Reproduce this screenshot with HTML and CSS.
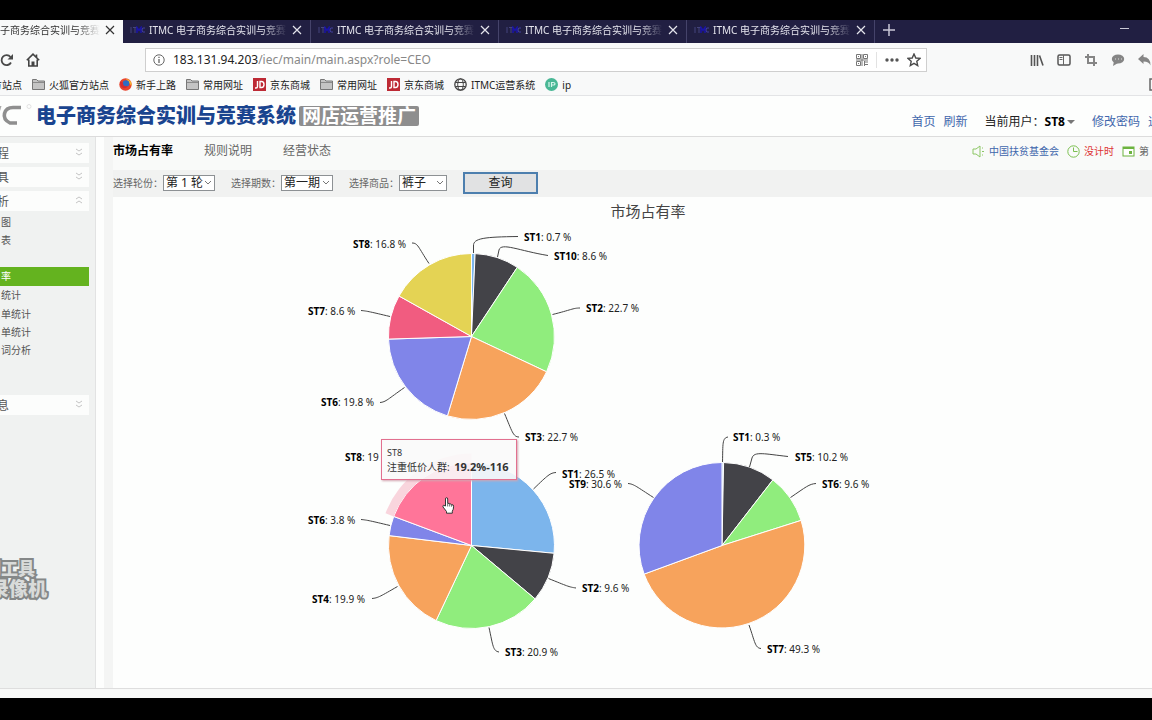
FILE: index.html
```html
<!DOCTYPE html>
<html lang="zh-CN">
<head>
  <meta charset="UTF-8">
  <title>ITMC 电子商务综合实训与竞赛系统</title>
  <link rel="stylesheet" href="styles.css">
</head>
<body>
  <svg class="defs" width="0" height="0" aria-hidden="true">
    <symbol id="close" viewBox="0 0 10 10"><path d="M1 1l8 8M9 1l-8 8" fill="none" stroke="currentColor" stroke-width="1.2"/></symbol>
    <symbol id="folder" viewBox="0 0 13 13"><path d="M.5 11.500V1.500h4l1.500 1.500h6.500v8.500z" fill="#c4c4c4" stroke="#777"/><path d="M1 4.500h11" stroke="#8a8a8a"/></symbol>
    <symbol id="jd" viewBox="0 0 13 13"><path d="M0 0h13v13H0z" fill="#bd2a35"/><path d="M4.500 3v5.500q0 1.500-1.500 1.500H2M7 3.500v6h1.500q2.500 0 2.500-3t-2.500-3z" fill="none" stroke="#fff" stroke-width="1.400"/></symbol>
    <symbol id="fold" viewBox="0 0 8 8"><path d="M1 1l3 2 3-2M1 5l3 2 3-2" fill="none" stroke="#c4c4c4"/></symbol>
    <symbol id="arrow" viewBox="0 0 8 8"><path d="M1 2l3 3 3-3" fill="none" stroke="#777"/></symbol>
    <symbol id="itmc" viewBox="0 0 16 8"><path d="M1 1v6M3 1.500h4M5 1.500V7" fill="none" stroke="#45447c"/><path d="M7 7V1.500l2 3 2-3V7" fill="none" stroke="#1a14a8" stroke-width="1.500"/><path d="M15 2q-3-1-3 2t3 2" fill="none" stroke="#403f9b"/></symbol>
  </svg>

  <div class="tabs">
    <div class="tab active"><span class="tab-title">子商务综合实训与竞赛</span><button aria-label="关闭"><svg><use href="#close"/></svg></button></div>
    <div class="tab"><svg class="fav"><use href="#itmc"/></svg><span class="tab-title">ITMC 电子商务综合实训与竞赛</span><button aria-label="关闭"><svg><use href="#close"/></svg></button></div>
    <div class="tab"><svg class="fav"><use href="#itmc"/></svg><span class="tab-title">ITMC 电子商务综合实训与竞赛</span><button aria-label="关闭"><svg><use href="#close"/></svg></button></div>
    <div class="tab"><svg class="fav"><use href="#itmc"/></svg><span class="tab-title">ITMC 电子商务综合实训与竞赛</span><button aria-label="关闭"><svg><use href="#close"/></svg></button></div>
    <div class="tab"><svg class="fav"><use href="#itmc"/></svg><span class="tab-title">ITMC 电子商务综合实训与竞赛</span><button aria-label="关闭"><svg><use href="#close"/></svg></button></div>
    <button class="new-tab" aria-label="新标签"><svg width="12" height="12"><path d="M6 0v12M0 6h12" stroke="#c9c8d6" stroke-width="1.500"/></svg></button>
    <button class="min" aria-label="最小化"><svg width="9" height="12"><path d="M0 4.500h9" stroke="#c9c8d6"/></svg></button>
  </div>

  <div class="toolbar">
    <div class="nav">
      <button aria-label="刷新"><svg width="14" height="14" viewBox="0 0 14 14"><path d="M11 9.500A5 5 0 1 1 10.500 4" fill="none" stroke="#4a4a4a" stroke-width="1.800"/><path d="M13 1v5.500H7.500z" fill="#4a4a4a"/></svg></button>
      <button aria-label="主页"><svg width="14" height="14" viewBox="0 0 14 14"><path d="M.8 7.200L7 1.200l6.200 6M2.800 6.500V13h8.400V6.500M10.500 1.500v3" fill="none" stroke="#444" stroke-width="1.600"/><path d="M5.500 13V8.500h3V13z" fill="#444"/></svg></button>
    </div>
    <div class="urlbar">
      <svg width="12" height="12" viewBox="0 0 12 12"><circle cx="6" cy="6" r="5.200" fill="none" stroke="#666"/><path d="M6 5v4M6 2.700v1.300" stroke="#666" stroke-width="1.300"/></svg>
      <span class="url"><b>183.131.94.203</b>/iec/main/main.aspx?role=CEO</span>
      <svg width="12" height="12" viewBox="0 0 12 12"><path d="M.5 .5h4v4h-4zM7.500 .5h4v4h-4zM.5 7.500h4v4h-4zM2 2.500h1M9 2.500h1M2 9.500h1M6 0v12M0 6h12M8 8h4M8 10.500h4M8.500 7v5" fill="none" stroke="#777"/></svg>
      <i class="sep"></i>
      <svg width="14" height="12"><circle cx="2" cy="6" r="1.700" fill="#555"/><circle cx="7" cy="6" r="1.700" fill="#555"/><circle cx="12" cy="6" r="1.700" fill="#555"/></svg>
      <svg width="14" height="14" viewBox="0 0 14 14"><path d="M7 1l1.800 4 4.200.4-3.200 2.900.9 4.300L7 10.400l-3.700 2.200.9-4.300L1 5.400 5.200 5z" fill="none" stroke="#4a4a4a" stroke-width="1.400"/></svg>
    </div>
    <div class="tools">
      <svg width="14" height="14" viewBox="0 0 14 14"><path d="M1.500 2v11M4.500 2v11M7.500 2v11M9.500 2.500l3.500 10" stroke="#555" stroke-width="1.600"/></svg>
      <svg width="14" height="14" viewBox="0 0 14 14"><rect x="1" y="2" width="12" height="10" rx="1.500" fill="none" stroke="#555" stroke-width="1.500"/><path d="M6.500 2v10M2.500 4.500h3M2.500 6.500h3" stroke="#666"/></svg>
      <svg width="14" height="14" viewBox="0 0 14 14"><path d="M4 1v9h9M1 4h9v9" fill="none" stroke="#858585" stroke-width="2"/></svg>
      <svg width="14" height="14" viewBox="0 0 14 14"><ellipse cx="7" cy="6" rx="6.200" ry="4.500" fill="#858585"/><path d="M3 8l-1 5 5-3z" fill="#858585"/><path d="M4 6h1M7 6h1M10 6h1" stroke="#ddd"/></svg>
      <svg width="14" height="14" viewBox="0 0 14 14"><path d="M0 6l5.500-5v3q7 0 7 8.500-1.500-4-7-4V11z" fill="#858585"/></svg>
    </div>
  </div>

  <div class="bookmarks">
    <a href="#">方站点</a>
    <a href="#"><svg><use href="#folder"/></svg>火狐官方站点</a>
    <a href="#"><svg viewBox="0 0 13 13"><circle cx="6.500" cy="6.500" r="6.200" fill="#e8442e"/><path d="M7 1a5.800 5.800 0 0 1 5.500 7Q10 5 7 1z" fill="#f6b52e"/><circle cx="7" cy="5.500" r="3.300" fill="#2c6dc4"/><path d="M1 4q2-1 3 1 0 4 5 3-2 3-5 2T1 4z" fill="#d22d32"/></svg>新手上路</a>
    <a href="#"><svg><use href="#folder"/></svg>常用网址</a>
    <a href="#"><svg><use href="#jd"/></svg>京东商城</a>
    <a href="#"><svg><use href="#folder"/></svg>常用网址</a>
    <a href="#"><svg><use href="#jd"/></svg>京东商城</a>
    <a href="#"><svg viewBox="0 0 13 13"><circle cx="6.500" cy="6.500" r="5.700" fill="none" stroke="#444" stroke-width="1.300"/><ellipse cx="6.500" cy="6.500" rx="2.800" ry="5.700" fill="none" stroke="#444"/><path d="M1.500 4.500h10M1.500 8.500h10" stroke="#444"/></svg>ITMC运营系统</a>
    <a href="#"><svg viewBox="0 0 13 13"><circle cx="6.500" cy="6.500" r="6.500" fill="#49b795"/><path d="M4 4v5M6.500 9V4.500h1.500q2 0 2 1.300T8 7H6.500" fill="none" stroke="#d8f5ec" stroke-width="1.200"/></svg>ip</a>
    <svg class="more" viewBox="0 0 8 13"><path d="M8 1H1v11h7" fill="none" stroke="#666" stroke-width="1.500"/></svg>
  </div>

  <div class="header">
    <svg class="logo" viewBox="0 0 34 26"><path d="M21 4.500h-8Q6 4.500 4.500 10.500T10 20h7" fill="none" stroke="#8f8f8f" stroke-width="3.600"/><path d="M0 3h1.500L0 8z" fill="#aaa"/><circle cx="29" cy="3.500" r="2" fill="none" stroke="#e2e2e2"/></svg>
    <h1>电子商务综合实训与竞赛系统</h1>
    <span class="badge">网店运营推广</span>
    <div class="user">
      <a href="#">首页</a>
      <a href="#">刷新</a>
      <span class="who">当前用户：<b>ST8</b><i class="caret"></i></span>
      <a href="#">修改密码</a>
      <a href="#">退</a>
    </div>
  </div>

  <div class="main">
    <div class="sidebar">
      <h3>程<svg><use href="#fold"/></svg></h3>
      <h3>具<svg><use href="#fold"/></svg></h3>
      <h3>析<svg class="up"><use href="#fold"/></svg></h3>
      <ul>
        <li><a href="#">图</a></li>
        <li><a href="#">表</a></li>
        <li></li>
        <li class="on"><a href="#">率</a></li>
        <li><a href="#">统计</a></li>
        <li><a href="#">单统计</a></li>
        <li><a href="#">单统计</a></li>
        <li><a href="#">词分析</a></li>
        <li></li>
        <li></li>
      </ul>
      <h3>息<svg><use href="#fold"/></svg></h3>
      <div class="watermark"><span>制工具</span><b>录像机</b></div>
    </div>

    <div class="content">
      <div class="subnav">
        <a class="on" href="#">市场占有率</a>
        <a href="#">规则说明</a>
        <a href="#">经营状态</a>
        <div class="status">
          <svg width="13" height="13" viewBox="0 0 13 13"><path d="M1 4h3l4-3v11L4 9H1zM10 3h1M10 6.500h2M10 10h1" fill="none" stroke="#8cc665"/></svg>
          <a href="#">中国扶贫基金会</a>
          <svg width="13" height="13" viewBox="0 0 13 13"><circle cx="6.500" cy="6.500" r="5.700" fill="none" stroke="#7bbf4f"/><path d="M6.500 2.500v4h4" fill="none" stroke="#7bbf4f"/></svg>
          <span class="red">没计时</span>
          <svg width="13" height="13" viewBox="0 0 13 13"><rect x="1" y="2" width="11" height="9" fill="#fff" stroke="#6cb33f"/><path d="M1 3h11" stroke="#6cb33f" stroke-width="2"/><path d="M7 6h3v3H7z" fill="#6cb33f"/></svg>
          <span>第</span>
        </div>
      </div>

      <form class="filter">
        <label for="round">选择轮份：</label>
        <span class="select"><select id="round"><option>第 1 轮</option></select><svg><use href="#arrow"/></svg></span>
        <label for="period">选择期数：</label>
        <span class="select"><select id="period"><option>第一期</option></select><svg><use href="#arrow"/></svg></span>
        <label for="goods">选择商品：</label>
        <span class="select short"><select id="goods"><option>裤子</option></select><svg><use href="#arrow"/></svg></span>
        <button type="button">查询</button>
      </form>

      <div class="chart">
        <svg width="1071" height="488" viewBox="113 197 1071 488">
          <text class="chart-title" x="648" y="217" text-anchor="middle">市场占有率</text>

          <g class="pie">
            <path fill="#7cb5ec" d="M471.500 336.500V253.500A83 83 0 0 1 475.100 253.600z"/>
            <path fill="#434348" d="M471.500 336.500L475.100 253.600A83 83 0 0 1 517.300 267.300z"/>
            <path fill="#90ed7d" d="M471.500 336.500L517.300 267.300A83 83 0 0 1 546.600 371.800z"/>
            <path fill="#f7a35c" d="M471.500 336.500L546.600 371.800A83 83 0 0 1 447.400 415.900z"/>
            <path fill="#8085e9" d="M471.500 336.500L447.400 415.900A83 83 0 0 1 388.500 339.100z"/>
            <path fill="#f15c80" d="M471.500 336.500L388.500 339.100A83 83 0 0 1 399 296z"/>
            <path fill="#e4d354" d="M471.500 336.500L399 296A83 83 0 0 1 471.500 253.500z"/>
          </g>
          <g class="pie">
            <path fill="#7cb5ec" d="M471.500 545.500V462.500A83 83 0 0 1 554.100 553.300z"/>
            <path fill="#434348" d="M471.500 545.500L554.100 553.300A83 83 0 0 1 535.100 598.900z"/>
            <path fill="#90ed7d" d="M471.500 545.500L535.100 598.900A83 83 0 0 1 436.100 620.600z"/>
            <path fill="#f7a35c" d="M471.500 545.500L436.100 620.600A83 83 0 0 1 389.100 535.600z"/>
            <path fill="#8085e9" d="M471.500 545.500L389.100 535.600A83 83 0 0 1 393.700 516.400z"/>
            <path fill="#ff7599" d="M471.500 545.500L393.700 516.400A83 83 0 0 1 471.500 462.500z"/>
          </g>
          <path class="halo" d="M393.700 516.400L385.500 513.300A92 92 0 0 1 471.500 453.500V462.500A83 83 0 0 0 393.700 516.400z"/>
          <g class="pie">
            <path fill="#7cb5ec" d="M722 545.500V462.500A83 83 0 0 1 723.600 462.500z"/>
            <path fill="#434348" d="M722 545.500L723.600 462.500A83 83 0 0 1 772.900 479.900z"/>
            <path fill="#90ed7d" d="M722 545.500L772.900 479.900A83 83 0 0 1 801.100 520.400z"/>
            <path fill="#f7a35c" d="M722 545.500L801.100 520.400A83 83 0 0 1 644.100 574.100z"/>
            <path fill="#8085e9" d="M722 545.500L644.100 574.100A83 83 0 0 1 722 462.500z"/>
          </g>

          <g class="lines">
            <path d="M518 236.500C485 237 473 238 473.500 246V253"/>
            <path d="M548 255.500C520 251 501 242 499 250L497.500 257"/>
            <path d="M580 308C573 308 571 310 552.500 314.500"/>
            <path d="M519 437C513 437 512 431 504.500 413.500"/>
            <path d="M380 402.500C386 402 388 399 404.500 387.500"/>
            <path d="M361 310.500C367 311 371 312 390 316.500"/>
            <path d="M412 243C418 243 418 247 429 263.500"/>
            <path d="M556 472.500C550 473 548 475 533.500 489"/>
            <path d="M576 588C569 587 567 586 548.500 578.500"/>
            <path d="M499 652C493 651 493 646 489 627.500"/>
            <path d="M372 598.500C378 598 381 596 397.500 586.500"/>
            <path d="M361 519.500C367 520 371 521 390 525.500"/>
            <path d="M728 437C722 438 723 444 722.500 462"/>
            <path d="M788 456.500C765 454 754 451 752 458L749.500 467"/>
            <path d="M816 483.500C809 484 806 487 790.500 497.500"/>
            <path d="M761 648.500C755 648 755 642 749 625"/>
            <path d="M628 483.500C634 484 637 487 653.500 497.500"/>
          </g>

          <g class="labels">
            <text x="524" y="241"><tspan>ST1</tspan>: 0.7 %</text>
            <text x="554" y="260"><tspan>ST10</tspan>: 8.6 %</text>
            <text x="586" y="312"><tspan>ST2</tspan>: 22.7 %</text>
            <text x="525" y="441"><tspan>ST3</tspan>: 22.7 %</text>
            <text x="321" y="406"><tspan>ST6</tspan>: 19.8 %</text>
            <text x="308" y="315"><tspan>ST7</tspan>: 8.6 %</text>
            <text x="353" y="248"><tspan>ST8</tspan>: 16.8 %</text>
            <text x="562" y="478"><tspan>ST1</tspan>: 26.5 %</text>
            <text x="582" y="592"><tspan>ST2</tspan>: 9.6 %</text>
            <text x="505" y="656"><tspan>ST3</tspan>: 20.9 %</text>
            <text x="312" y="603"><tspan>ST4</tspan>: 19.9 %</text>
            <text x="308" y="524"><tspan>ST6</tspan>: 3.8 %</text>
            <text x="345" y="461"><tspan>ST8</tspan>: 19</text>
            <text x="733" y="441"><tspan>ST1</tspan>: 0.3 %</text>
            <text x="795" y="461"><tspan>ST5</tspan>: 10.2 %</text>
            <text x="822" y="488"><tspan>ST6</tspan>: 9.6 %</text>
            <text x="767" y="653"><tspan>ST7</tspan>: 49.3 %</text>
            <text x="569" y="488"><tspan>ST9</tspan>: 30.6 %</text>
          </g>
        </svg>
        <div class="tooltip"><small>ST8</small><span>注重低价人群: <b>19.2%-116</b></span></div>
        <svg class="hand" viewBox="0 0 13 17"><path d="M3.500 9V2q0-1.300 1.100-1.300T5.700 2v4.500q1.800-.8 2 .5 1.600-.5 1.900.7 2-.3 2 1.500 0 3.500-1.300 5v2H4.500v-1.700L1 10q-.5-1.700.7-1.700z" fill="#fff" stroke="#333"/><path d="M5.700 6.500v3M7.700 7v2.500M9.600 7.700v2" stroke="#666"/></svg>
      </div>
    </div>
  </div>
  <div class="footer"></div>
</body>
</html>
```
FILE: styles.css
```css
* {
  box-sizing: border-box;
}
body {
  margin: 0;
  min-height: 100vh;
  display: flex;
  flex-direction: column;
  overflow: hidden;
  border-top: 20px solid #000;
  border-bottom: 22px solid #000;
  background: #fdfefd;
  color: #333;
  font: 12px/16px "Noto Sans", "Noto Sans CJK SC", sans-serif;
  white-space: nowrap;
}
a {
  color: inherit;
  text-decoration: none;
}
button {
  padding: 0;
  border: 0;
  background: none;
  color: inherit;
  font: inherit;
}
svg {
  display: block;
  flex: none;
}
.defs {
  position: absolute;
}

/* browser tabs */
.tabs {
  display: flex;
  height: 23px;
  background: #211f42;
  color: #e4e4ec;
  font-size: 10px;
}
.tab {
  display: flex;
  flex: none;
  align-items: center;
  width: 188px;
  padding: 0 8px 4px 7px;
  border-right: 1px solid #45436a;
}
.tab.active {
  width: 123px;
  padding-left: 0;
  border: 0;
  background: #f8f9f9;
  color: #333;
}
.fav {
  width: 16px;
  height: 8px;
  margin-right: 3px;
}
.tab-title {
  flex: 1;
  overflow: hidden;
  -webkit-mask-image: linear-gradient(to left, transparent, #000 24px);
  mask-image: linear-gradient(to left, transparent, #000 24px);
}
.tab button {
  margin-left: 5px;
}
.tab button svg {
  width: 10px;
  height: 10px;
}
.new-tab,
.min {
  margin-left: 8px;
  padding-bottom: 4px;
}
.min {
  margin: 0 23px 0 auto;
}

/* toolbar */
.toolbar {
  display: flex;
  align-items: center;
  height: 31px;
  padding-top: 3px;
  background: #f8f9f9;
}
.nav {
  display: flex;
  flex: none;
  gap: 12px;
  width: 145px;
}
.urlbar {
  display: flex;
  flex: 1;
  align-items: center;
  gap: 8px;
  height: 24px;
  padding: 0 5px 0 7px;
  border: 1px solid #cfcfcf;
  background: #fff;
}
.url {
  flex: 1;
  color: #888;
}
.url b {
  color: #222;
  font-weight: normal;
}
.sep {
  width: 1px;
  height: 16px;
  background: #e2e2e2;
}
.tools {
  display: flex;
  gap: 13px;
  margin: 0 0 0 103px;
}
.bookmarks {
  display: flex;
  align-items: center;
  gap: 10px;
  height: 22px;
  border-bottom: 1px solid #e3e4e6;
  background: #f8f9f9;
  color: #222;
  font-size: 10px;
}
.bookmarks a {
  display: flex;
  align-items: center;
  gap: 4px;
}
.bookmarks a:first-child {
  margin-left: -8px;
}
.bookmarks svg {
  width: 13px;
  height: 13px;
}
.bookmarks .more {
  width: 8px;
  margin: 0 -5px 0 auto;
}

/* site header */
.header {
  display: flex;
  align-items: center;
  height: 41px;
  border-bottom: 1px solid #dcdcdc;
}
.logo {
  width: 34px;
  height: 26px;
  margin-right: 2px;
}
.header h1 {
  margin: 0 3px 0 0;
  color: #19448f;
  font-size: 20px;
  font-weight: 900;
  line-height: 22px;
}
.badge {
  padding: 0 3px;
  border-radius: 2px;
  background: #8e8e8e;
  color: #fff;
  font-size: 19px;
  font-weight: 700;
  line-height: 20px;
}
.user {
  display: flex;
  gap: 8px;
  margin: 12px -8px 0 auto;
  color: #222;
}
.user a {
  color: #3f66ac;
}
.who {
  display: flex;
  align-items: center;
  margin: 0 9px;
}
.who b {
  color: #000;
}
.caret {
  margin: 0 0 0 2px;
  border: 4px solid transparent;
  border-top-color: #777;
  border-bottom: 0;
}

.main {
  display: flex;
  flex: 1;
}
.sidebar {
  position: relative;
  flex: none;
  width: 96px;
  padding-top: 6px;
  border-right: 1px solid #e2e3e3;
  background: #f0f2f1;
  color: #555;
}
.sidebar h3 {
  display: flex;
  align-items: center;
  justify-content: space-between;
  height: 20px;
  margin: 0 6px 4px 0;
  padding: 2px 6px 0 0;
  background: #fcfdfc;
  font-size: 12px;
  font-weight: normal;
  text-indent: -3px;
}
.sidebar svg {
  width: 8px;
  height: 8px;
  margin-bottom: 4px;
}
.sidebar .up {
  transform: rotate(180deg);
}
.sidebar ul {
  margin: -2px 6px 0 0;
  padding: 0;
  list-style: none;
  font-size: 10px;
}
.sidebar li {
  height: 18px;
  padding-left: 1px;
  line-height: 18px;
}
.sidebar .on,
.sidebar .on + li {
  height: 19px;
  line-height: 19px;
}
.sidebar .on {
  background: #64b31f;
  color: #fff;
}
.watermark {
  position: absolute;
  left: -16px;
  top: 422px;
  display: flex;
  flex-direction: column;
  color: #d9dbda;
  font-size: 17px;
  font-weight: 900;
  line-height: 20px;
  -webkit-text-stroke: 4px #858888;
  paint-order: stroke fill;
}
.watermark b {
  margin-left: 6px;
  font-size: 19px;
  font-weight: 900;
}

.content {
  flex: 1;
  min-width: 0;
  margin-left: 8px;
  border-left: 9px solid #f4f5f4;
}
.subnav {
  display: flex;
  align-items: center;
  gap: 31px;
  height: 33px;
  padding-bottom: 5px;
  background: #f9faf9;
  color: #666;
}
.subnav > .on {
  color: #000;
  font-weight: bold;
}
.status {
  display: flex;
  align-items: center;
  gap: 4px;
  margin: 0 3px 0 auto;
  font-size: 10px;
}
.status a {
  margin-right: 4px;
  color: #3f66ac;
}
.status .red {
  margin-right: 4px;
  color: #d33;
}
.filter {
  display: flex;
  align-items: center;
  height: 27px;
  padding-bottom: 1px;
  background: #f1f2f1;
  color: #666;
  font-size: 10px;
}
.select {
  position: relative;
  width: 52px;
  margin-right: 16px;
}
.select.short {
  width: 48px;
}
.select select {
  display: block;
  width: 100%;
  height: 16px;
  padding: 0 0 0 2px;
  border: 1px solid #8d9194;
  border-radius: 0;
  background: #fff;
  color: #222;
  font: 12px/14px "Noto Sans", "Noto Sans CJK SC", sans-serif;
  appearance: none;
}
.select svg {
  position: absolute;
  right: 3px;
  top: 4px;
  width: 8px;
  height: 8px;
  pointer-events: none;
}
.filter button {
  width: 75px;
  height: 22px;
  border: 2px solid #4d7fae;
  background: #e1e2e3;
  color: #222;
  font-size: 12px;
}

/* charts */
.chart {
  position: relative;
  overflow: hidden;
}
.chart-title {
  fill: #444;
  font-size: 15px;
}
.pie {
  stroke: #fff;
  stroke-linejoin: round;
}
.halo {
  fill: #f15c80;
  opacity: 0.25;
}
.lines {
  fill: none;
  stroke: #444;
}
.labels {
  fill: #222;
  font-size: 10px;
}
.labels tspan {
  fill: #000;
  font-weight: bold;
}
.tooltip {
  position: absolute;
  left: 268px;
  top: 242px;
  display: flex;
  flex-direction: column;
  padding: 7px 7px 4px 5px;
  border: 1px solid #e2708f;
  background: rgba(249, 249, 249, 0.9);
  box-shadow: 1px 1px 2px #d3a5b1;
  font-size: 10px;
  line-height: 16px;
}
.tooltip small {
  font-size: 9px;
  line-height: 12px;
}
.tooltip b {
  margin-left: 2px;
  font-size: 11px;
}
.hand {
  position: absolute;
  left: 329px;
  top: 300px;
  width: 13px;
  height: 17px;
}
.footer {
  height: 10px;
  border-top: 1px solid #dedede;
  background: #f8f9f8;
}
```
